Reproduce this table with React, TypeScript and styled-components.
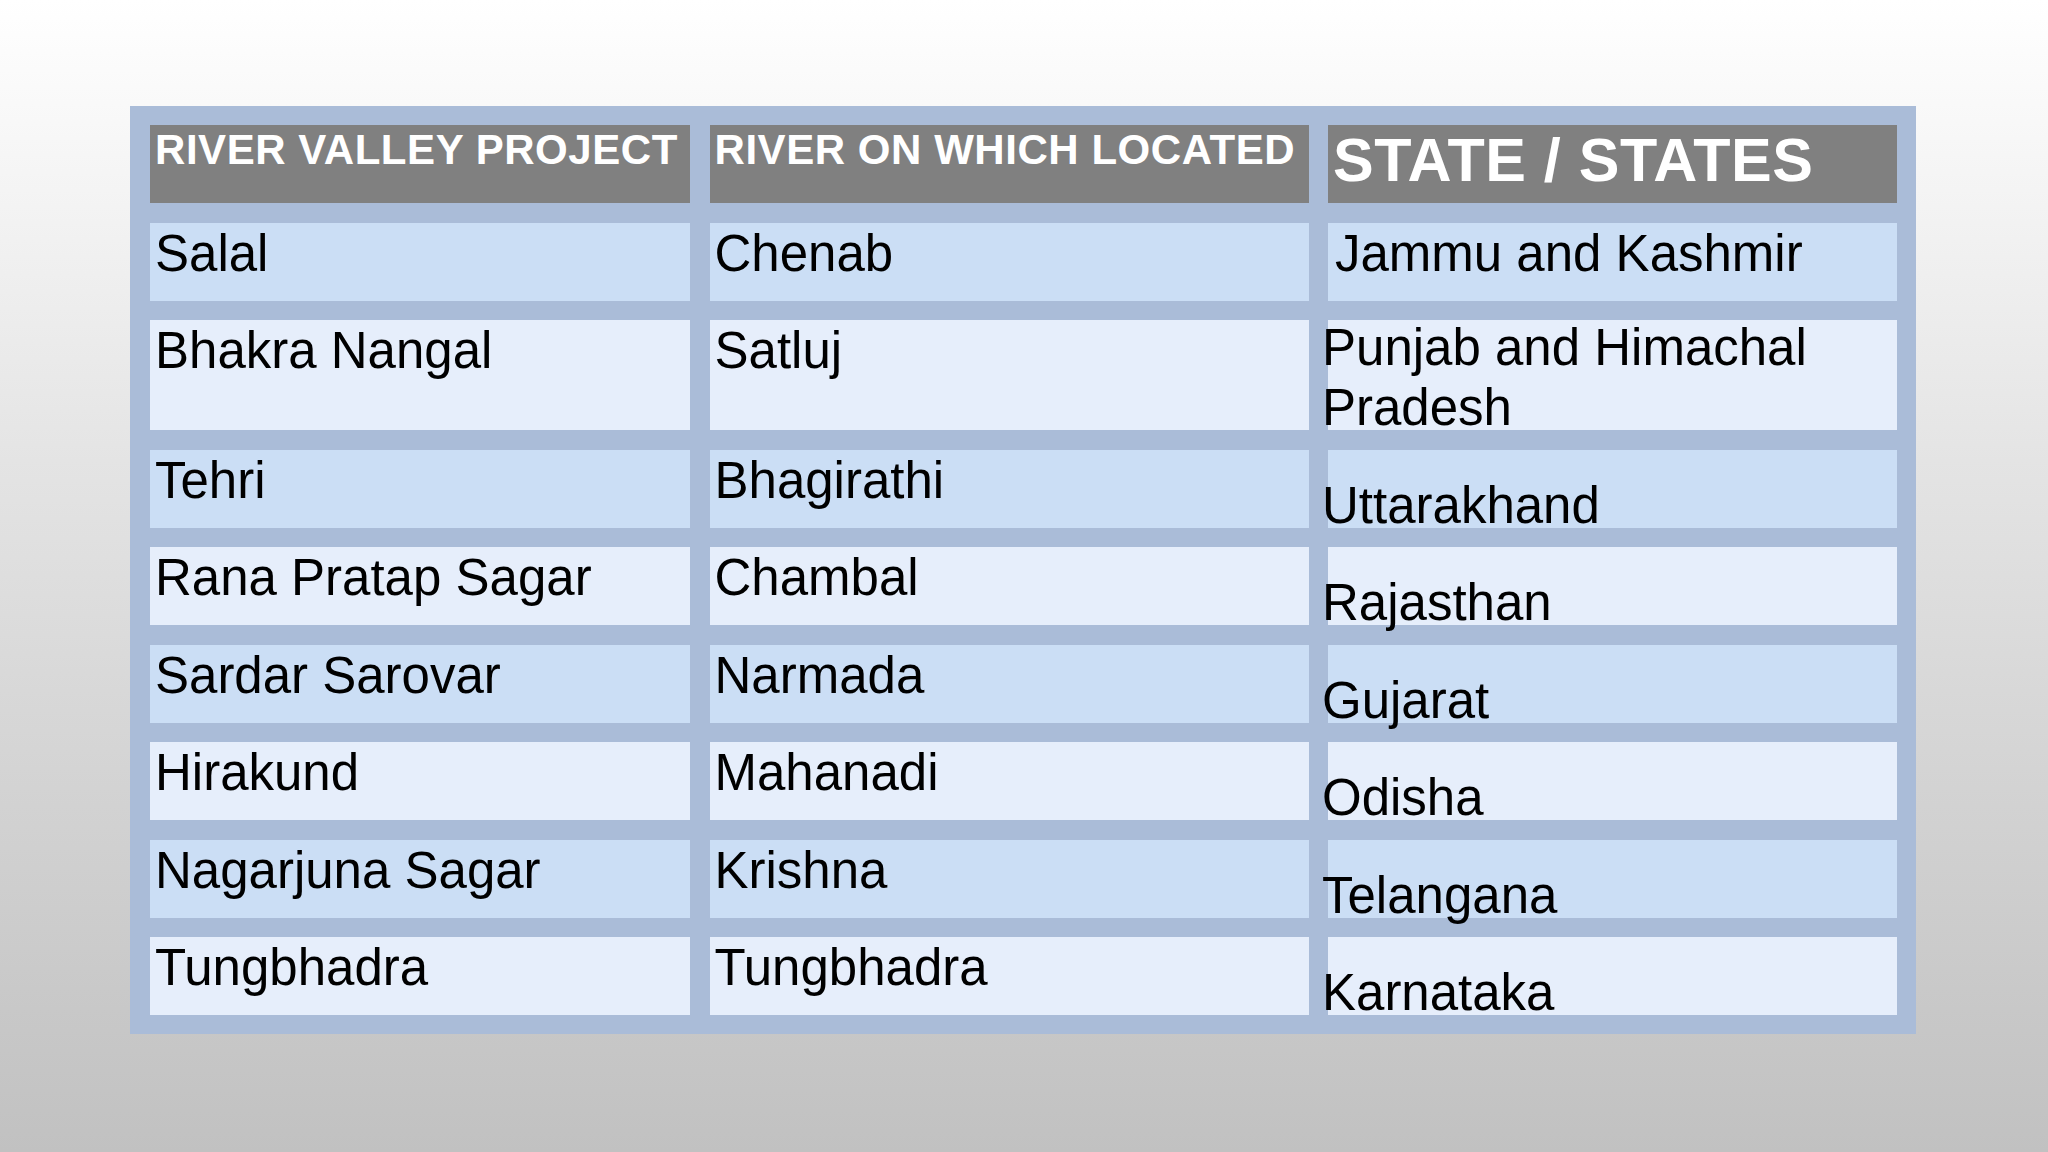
import React from "react";
import styled, { createGlobalStyle } from "styled-components";

const GlobalStyle = createGlobalStyle`
  html, body {
    margin: 0;
    padding: 0;
  }
  body {
    width: 2048px;
    height: 1152px;
    overflow: hidden;
    font-family: "Liberation Sans", Arial, sans-serif;
  }
`;

const Slide = styled.div`
  width: 2048px;
  height: 1152px;
  box-sizing: border-box;
  padding: 106px 0 0 130px;
  background: linear-gradient(180deg, #ffffff 0%, #f7f7f7 12%, #e4e4e4 40%, #d2d2d2 70%, #c1c1c1 100%);
`;

const TableFrame = styled.div`
  display: inline-grid;
  grid-template-columns: 540px 599px 569px;
  grid-template-rows: 78px 78px 110px repeat(6, 78px);
  column-gap: 19.5px;
  row-gap: 19.5px;
  padding: 19px 19px 19px 20px;
  background: #aabcd8;
`;

const HeaderCell = styled.div<{ $big?: boolean }>`
  background: #808080;
  color: #ffffff;
  font-weight: bold;
  font-size: ${(p) => (p.$big ? "61px" : "42px")};
  letter-spacing: ${(p) => (p.$big ? "0.5px" : "0.55px")};
  line-height: 1.15;
  padding: ${(p) => (p.$big ? "0" : "1px")} 0 0 5px;
  white-space: nowrap;
  overflow: visible;
`;

const BodyCell = styled.div<{ $alt: boolean; $bottom?: boolean; $inset?: number }>`
  display: flex;
  flex-direction: column;
  justify-content: ${(p) => (p.$bottom ? "flex-end" : "flex-start")};
  background: ${(p) => (p.$alt ? "#e6eefb" : "#cbdef5")};
  color: #000000;
  font-size: 51px;
  line-height: 60px;
  padding: ${(p) => (p.$bottom ? "0" : "1px")} 0 0 ${(p) => p.$inset ?? 5}px;
  min-width: 0;
`;

const CellText = styled.span<{ $shift?: boolean }>`
  display: block;
  white-space: pre-line;
  margin-left: ${(p) => (p.$shift ? "-6px" : "0")};
  margin-bottom: ${(p) => (p.$shift ? "-8px" : "0")};
`;

const rows: [string, string, string][] = [
  ["Salal", "Chenab", "Jammu and Kashmir"],
  ["Bhakra Nangal", "Satluj", "Punjab and Himachal\nPradesh"],
  ["Tehri", "Bhagirathi", "Uttarakhand"],
  ["Rana Pratap Sagar", "Chambal", "Rajasthan"],
  ["Sardar Sarovar", "Narmada", "Gujarat"],
  ["Hirakund", "Mahanadi", "Odisha"],
  ["Nagarjuna Sagar", "Krishna", "Telangana"],
  ["Tungbhadra", "Tungbhadra", "Karnataka"],
];

export default function App() {
  return (
    <>
      <GlobalStyle />
      <Slide>
        <TableFrame>
          <HeaderCell>RIVER VALLEY PROJECT</HeaderCell>
          <HeaderCell>RIVER ON WHICH LOCATED</HeaderCell>
          <HeaderCell $big>STATE / STATES</HeaderCell>
          {rows.map(([project, river, state], i) => {
            const alt = i % 2 === 1;
            const first = i === 0;
            return (
              <React.Fragment key={project + i}>
                <BodyCell $alt={alt}>
                  <CellText>{project}</CellText>
                </BodyCell>
                <BodyCell $alt={alt}>
                  <CellText>{river}</CellText>
                </BodyCell>
                <BodyCell $alt={alt} $bottom={!first} $inset={first ? 7 : 0}>
                  <CellText $shift={!first}>{state}</CellText>
                </BodyCell>
              </React.Fragment>
            );
          })}
        </TableFrame>
      </Slide>
    </>
  );
}
